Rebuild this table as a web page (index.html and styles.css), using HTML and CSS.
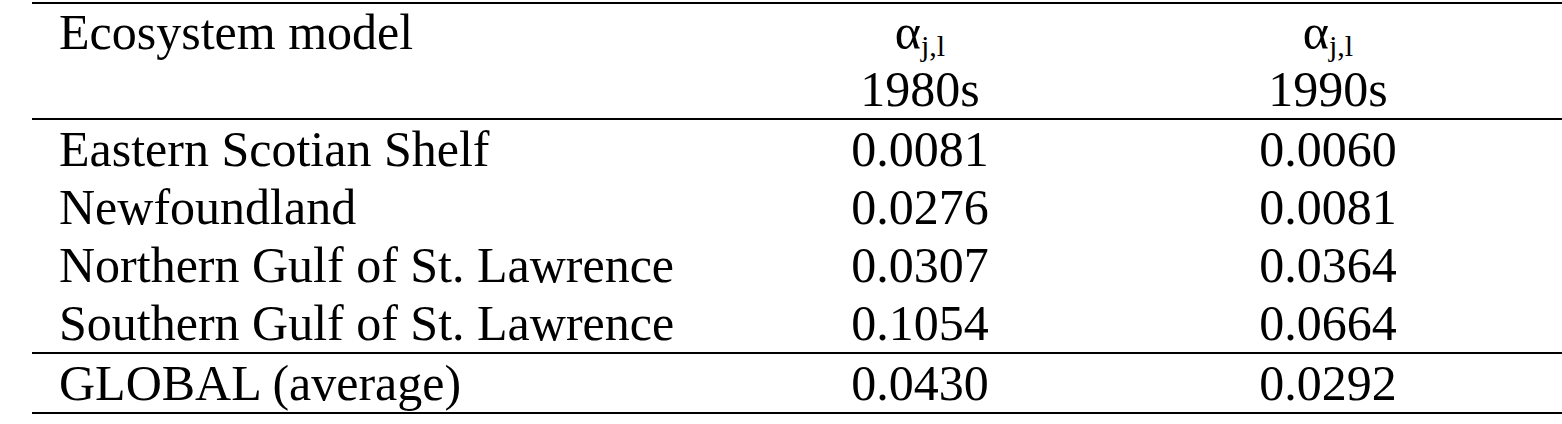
FILE: index.html
```html
<!DOCTYPE html>
<html>
  <head>
    <link rel="stylesheet" href="styles.css">
  </head>
  <body>
    <table class="alpha-table">
      <colgroup>
        <col class="col-name">
        <col class="col-val">
        <col class="col-val-last">
      </colgroup>
      <thead>
        <tr>
          <th class="name">Ecosystem model</th>
          <th class="val">&alpha;<sub>j,l</sub><br>1980s</th>
          <th class="val last">&alpha;<sub>j,l</sub><br>1990s</th>
        </tr>
      </thead>
      <tbody>
        <tr>
          <td class="name">Eastern Scotian Shelf</td>
          <td class="val">0.0081</td>
          <td class="val last">0.0060</td>
        </tr>
        <tr>
          <td class="name">Newfoundland</td>
          <td class="val">0.0276</td>
          <td class="val last">0.0081</td>
        </tr>
        <tr>
          <td class="name">Northern Gulf of St. Lawrence</td>
          <td class="val">0.0307</td>
          <td class="val last">0.0364</td>
        </tr>
        <tr>
          <td class="name">Southern Gulf of St. Lawrence</td>
          <td class="val">0.1054</td>
          <td class="val last">0.0664</td>
        </tr>
      </tbody>
      <tfoot>
        <tr>
          <td class="name">GLOBAL (average)</td>
          <td class="val">0.0430</td>
          <td class="val last">0.0292</td>
        </tr>
      </tfoot>
    </table>
  </body>
</html>
```

FILE: styles.css
```css
/* table layout */
body {
  margin: 0;
  background: #fff;
  color: #000;
  font-family: "Liberation Serif", "Times New Roman", serif;
}

.alpha-table {
  margin: 2px 0 0 32px;
  width: 1530px;
  border-collapse: collapse;
  table-layout: fixed;
  font-size: 50px;
  line-height: 58px;
}

.col-name {
  width: 684px;
}

.col-val {
  width: 408px;
}

.col-val-last {
  width: 438px;
}

.alpha-table th,
.alpha-table td {
  padding: 0;
  font-weight: normal;
  vertical-align: top;
  white-space: nowrap;
}

.alpha-table thead tr {
  border-top: 2px solid #000;
  border-bottom: 2px solid #000;
  line-height: 57px;
}

.alpha-table tfoot tr {
  border-top: 2px solid #000;
  border-bottom: 2px solid #000;
}

.name {
  text-align: left;
  padding-left: 27px !important;
}

.val {
  text-align: center;
}

.last {
  padding-right: 30px !important;
}

sub {
  font-size: 30px;
  line-height: 0;
  vertical-align: -7px;
}
```
